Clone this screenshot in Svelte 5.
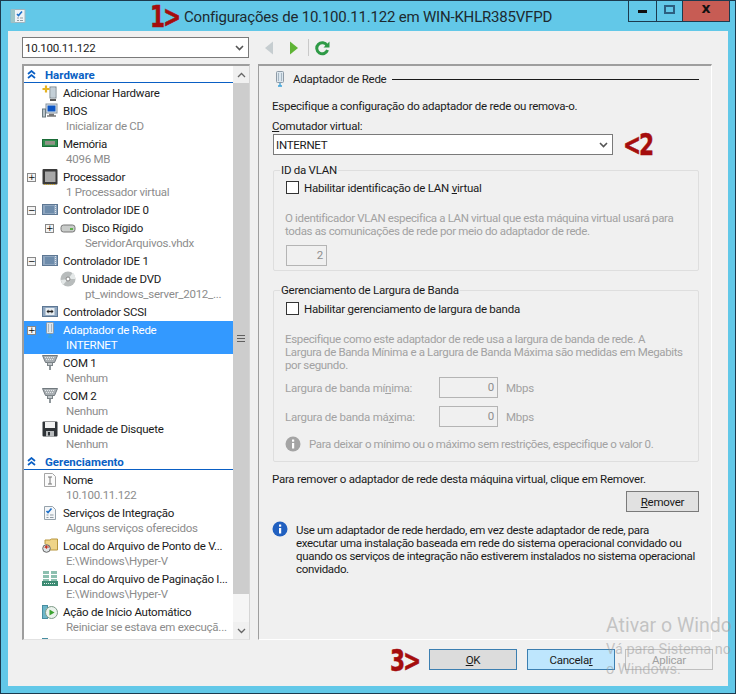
<script>
  const hardware = [
    { t: 'Adicionar Hardware', i: 'add' },
    { t: 'BIOS', s: 'Inicializar de CD', i: 'bios' },
    { t: 'Memória', s: '4096 MB', i: 'mem' },
    { t: 'Processador', s: '1 Processador virtual', i: 'cpu', x: '+' },
    { t: 'Controlador IDE 0', i: 'ide', x: '-' },
    { t: 'Disco Rígido', s: 'ServidorArquivos.vhdx', i: 'disk', x: '+', sub: true },
    { t: 'Controlador IDE 1', i: 'ide', x: '-' },
    { t: 'Unidade de DVD', s: 'pt_windows_server_2012_...', i: 'dvd', sub: true },
    { t: 'Controlador SCSI', i: 'scsi' },
    { t: 'Adaptador de Rede', s: 'INTERNET', i: 'net', x: '+', sel: true },
    { t: 'COM 1', s: 'Nenhum', i: 'com' },
    { t: 'COM 2', s: 'Nenhum', i: 'com' },
    { t: 'Unidade de Disquete', s: 'Nenhum', i: 'floppy' }
  ];
  const manage = [
    { t: 'Nome', s: '10.100.11.122', i: 'name' },
    { t: 'Serviços de Integração', s: 'Alguns serviços oferecidos', i: 'doc' },
    { t: 'Local do Arquivo de Ponto de V...', s: 'E:\\Windows\\Hyper-V', i: 'folder' },
    { t: 'Local do Arquivo de Paginação I...', s: 'E:\\Windows\\Hyper-V', i: 'page' },
    { t: 'Ação de Início Automático', s: 'Reiniciar se estava em execuçã...', i: 'start' },
    { t: '', i: 'start' }
  ];
</script>

{#snippet icon(name)}
  <svg class="ic" viewBox="0 0 16 16" width="16" height="16" aria-hidden="true">
    {#if name === 'add'}
      <rect x="8" y="2" width="6" height="11" fill="#e8eef2" stroke="#77838c"/><path d="M10 3v9M12 3v9" stroke="#9fb0bb"/><path d="M8 15h6" stroke="#333" stroke-width="1.6"/><path d="M4 0.500v7M0.500 4h7" stroke="#e6b422" stroke-width="2.200"/>
    {:else if name === 'bios'}
      <rect x="4" y="1" width="11" height="9" fill="#dfe7ee" stroke="#8794a0"/><rect x="5.500" y="2.500" width="8" height="6" fill="#0d56c4"/><path d="M7 11.500h5M5 13h9" stroke="#777" stroke-width="1.400"/><rect x="0.500" y="6" width="3" height="8" fill="#b9c3c9" stroke="#6c7a80"/>
    {:else if name === 'mem'}
      <rect x="0.500" y="3.500" width="15" height="7" fill="#2f8f4e" stroke="#1c6b38"/><rect x="3" y="5" width="10" height="3.500" fill="#f3f0dc"/><path d="M4 5v3.500M6 5v3.500M8 5v3.500M10 5v3.500M12 5v3.500" stroke="#333"/>
    {:else if name === 'cpu'}
      <rect x="0.500" y="0" width="15" height="15.500" rx="1" fill="#3b3b3b"/><rect x="3" y="2.500" width="10.500" height="10.500" fill="#a8a8a8"/><path d="M2 15.500h12" stroke="#c9a227" stroke-dasharray="1 1"/>
    {:else if name === 'ide'}
      <rect x="0.500" y="2.500" width="15" height="10" fill="#8fa6bf" stroke="#5d7793"/><rect x="3" y="4" width="9" height="7" fill="#6e8cab"/><path d="M13.500 3v9" stroke="#dde5ec" stroke-dasharray="1 1"/>
    {:else if name === 'disk'}
      <rect x="1" y="5" width="14" height="7" rx="2.500" fill="#c9ccca" stroke="#777"/><rect x="10" y="8" width="3" height="2" fill="#5fb04a"/>
    {:else if name === 'dvd'}
      <circle cx="8" cy="8" r="7.500" fill="#b8bcbc"/><path d="M8 8 L13 1.500 A7.500 7.500 0 0 1 15 8Z" fill="#e4e8e8"/><path d="M8 8 L3 14 A7.500 7.500 0 0 1 1 9Z" fill="#e4e8e8"/><circle cx="8" cy="8" r="2" fill="#fff" stroke="#888"/>
    {:else if name === 'scsi'}
      <rect x="0.500" y="2.500" width="15" height="10" fill="#8fa6bf" stroke="#5d7793"/><rect x="3.500" y="4" width="9" height="7" fill="#e8eef2"/><path d="M4.500 7.500l2-2v1.200h3V5.500l2 2-2 2V8.300h-3v1.200z" fill="#222"/>
    {:else if name === 'net'}
      <rect x="4.500" y="0.500" width="7" height="11" rx="1" fill="#dce6ee" stroke="#8d9aa6"/><path d="M6.500 2v8M9.500 2v8" stroke="#a6b6c2"/><path d="M8 12v3M6 15h4" stroke="#3aa0d8" stroke-width="1.300"/>
    {:else if name === 'com'}
      <path d="M0.500 0.500h15l-3 7H3.500z" fill="#a9afb3" stroke="#71797e"/><path d="M3 2.500h10M4 4.500h8" stroke="#e5e8ea" stroke-dasharray="1 1"/><rect x="5.500" y="7.500" width="5" height="3" fill="#c3c8cb" stroke="#7c8488"/><rect x="7" y="11" width="2" height="4" fill="#8f979b"/>
    {:else if name === 'floppy'}
      <rect x="0.500" y="0.500" width="15" height="15" rx="1" fill="#2f3337"/><rect x="3" y="1" width="10" height="6" fill="#f2f2f2"/><rect x="4" y="10" width="8" height="5.500" fill="#b9bcbe"/><rect x="6" y="11" width="2" height="3.500" fill="#2f3337"/>
    {:else if name === 'name'}
      <path d="M2.500 1.500h8l3 3v10h-11z" fill="#fbfbfb" stroke="#a5a5a5"/><path d="M6 5h4M8 5v7M6 12h4" stroke="#777" fill="none"/>
    {:else if name === 'doc'}
      <path d="M2.500 1.500h8l3 3v10h-11z" fill="#f4f6f8" stroke="#96a2ab"/><path d="M4.500 6l1.500 1.500 3.500-4" stroke="#1c6fc9" stroke-width="1.600" fill="none"/><path d="M4.500 10h2M8 10h3.500M4.500 12.500h2M8 12.500h3.500" stroke="#8f9ba3"/>
    {:else if name === 'folder'}
      <path d="M3 6V2h5l1.500-1H15.500v11H7" fill="#efd488" stroke="#b8963e"/><circle cx="4.500" cy="10.500" r="3.800" fill="#dfe4e6" stroke="#666"/><path d="M7 9H3.500l1.500-1.500M3.500 9l1.500 1.500" stroke="#c8321e" stroke-width="1.200" fill="none"/>
    {:else if name === 'page'}
      <path d="M1 0h6v3H1zM9 0h6v3H9zM1 4h6v3H1zM9 4h6v3H9zM1 8h6v2H1zM9 8h6v2H9z" fill="#8dc0b0"/><rect x="0" y="10" width="16" height="5" fill="#3c8a72"/><path d="M2 12.500h12" stroke="#e6f0ec" stroke-dasharray="1 1"/>
    {:else if name === 'start'}
      <rect x="0.500" y="1.500" width="5" height="13" fill="#6cb6c9" stroke="#478da0"/><circle cx="9.500" cy="8.500" r="6" fill="#eaf2ec" stroke="#7d9a86"/><path d="M7.500 5.500l5 3-5 3z" fill="#3aa32f"/>
    {:else if name === 'info'}
      <circle cx="8" cy="8" r="7.500" fill="#2160c0"/><rect x="7" y="7" width="2.200" height="5.500" fill="#fff"/><rect x="7" y="3.500" width="2.200" height="2.200" fill="#fff"/>
    {:else if name === 'infogray'}
      <circle cx="8" cy="8" r="7.500" fill="#a4a4a4"/><rect x="7" y="7" width="2.200" height="5.500" fill="#fff"/><rect x="7" y="3.500" width="2.200" height="2.200" fill="#fff"/>
    {/if}
  </svg>
{/snippet}

{#snippet chevrons()}
  <svg class="cv" viewBox="0 0 9 9" width="9" height="9" aria-hidden="true"><path d="M1 4l3.500-3L8 4M1 8l3.500-3L8 8" fill="none" stroke="#0a5fc4" stroke-width="1.700"/></svg>
{/snippet}

{#snippet drop()}
  <svg viewBox="0 0 9 6" width="9" height="6" aria-hidden="true"><path d="M1 1l3.500 3.500L8 1" fill="none" stroke="#555" stroke-width="1.600"/></svg>
{/snippet}

{#snippet row(r)}
  <div class="item" class:sel={r.sel} class:nested={r.sub}>
    <div class="line">
      <span class="exp">{#if r.x}<span class="box">{r.x === '+' ? '+' : '−'}</span>{/if}</span>
      {@render icon(r.i)}
      <span class="lbl">{r.t}</span>
    </div>
    {#if r.s}<div class="subline">{r.s}</div>{/if}
  </div>
{/snippet}

<div class="win">
  <header class="title">
    <svg class="appicon" viewBox="0 0 16 16" width="16" height="16" aria-hidden="true"><path d="M1 1.500h14v13H1z" fill="#eef3f6" stroke="#9fb5bf"/><path d="M1 1.500h4v13H1z" fill="#9cc6c9"/><path d="M7 6l1.500 1.500L12 3.500" stroke="#1c6fc9" stroke-width="1.600" fill="none"/><path d="M7 10h2M10 10h3M7 12.500h2M10 12.500h3" stroke="#8f9ba3"/></svg>
    <span class="caption">Configurações de 10.100.11.122 em WIN-KHLR385VFPD</span>
    <div class="ctrls">
      <div class="ctl min"><i></i></div>
      <div class="ctl max"><i></i></div>
      <div class="ctl close">x</div>
    </div>
  </header>

  <div class="client">
    <div class="toolbar">
      <div class="combo vm"><span>10.100.11.122</span>{@render drop()}</div>
      <div class="nav">
        <svg viewBox="0 0 10 14" width="10" height="14" aria-hidden="true"><path d="M9 0.500v13L1 7z" fill="#c6cdd0"/></svg>
        <svg viewBox="0 0 10 14" width="10" height="14" aria-hidden="true"><path d="M1 0.500v13L9 7z" fill="#5fb435"/></svg>
        <span class="sep"></span>
        <svg viewBox="0 0 16 16" width="16" height="16" aria-hidden="true"><path d="M13 5.500A5.500 5.500 0 1 0 13.500 10" fill="none" stroke="#2e9a46" stroke-width="3"/><path d="M15.500 1.500v6h-6z" fill="#2e9a46"/></svg>
      </div>
    </div>

    <div class="panes">
      <aside class="tree">
        <div class="list">
          <div class="head">{@render chevrons()}<span>Hardware</span></div>
          {#each hardware as r}{@render row(r)}{/each}
          <div class="head">{@render chevrons()}<span>Gerenciamento</span></div>
          {#each manage as r}{@render row(r)}{/each}
        </div>
        <div class="scroll">
          <div class="sbtn"><svg viewBox="0 0 9 6" width="9" height="6" aria-hidden="true"><path d="M1 5l3.500-3.500L8 5" fill="none" stroke="#666" stroke-width="1.300"/></svg></div>
          <div class="thumb"><i></i><i></i><i></i></div>
          <div class="track"></div>
          <div class="sbtn"><svg viewBox="0 0 9 6" width="9" height="6" aria-hidden="true"><path d="M1 1l3.500 3.500L8 1" fill="none" stroke="#666" stroke-width="1.300"/></svg></div>
        </div>
      </aside>

      <main class="detail">
        <div class="dhead">{@render icon('net')}<span>Adaptador de Rede</span><b></b></div>
        <p class="intro">Especifique a configuração do adaptador de rede ou remova-o.</p>
        <p class="swlabel"><u>C</u>omutador virtual:</p>
        <div class="combo sw"><span>INTERNET</span>{@render drop()}</div>

        <fieldset class="vlan">
          <legend>ID da VLAN</legend>
          <div class="check"><span class="cb"></span><span>Habilitar identificação de LAN <u>v</u>irtual</span></div>
          <p class="dim d1">O identificador VLAN especifica a LAN virtual que esta máquina virtual usará para<br>todas as comunicações de rede por meio do adaptador de rede.</p>
          <div class="num n1">2</div>
        </fieldset>

        <fieldset class="band">
          <legend>Gerenciamento de Largura de Banda</legend>
          <div class="check c2"><span class="cb"></span><span>Habilitar <u>g</u>erenciamento de largura de banda</span></div>
          <p class="dim d2">Especifique como este adaptador de rede usa a largura de banda de rede. A<br>Largura de Banda Mínima e a Largura de Banda Máxima são medidas em Megabits<br>por segundo.</p>
          <div class="bw b1"><span class="bl">Largura de banda mí<u>n</u>ima:</span><div class="num n2">0</div><span>Mbps</span></div>
          <div class="bw b2"><span class="bl">Largura de banda má<u>x</u>ima:</span><div class="num n2">0</div><span>Mbps</span></div>
          <div class="hint">{@render icon('infogray')}<span>Para deixar o mínimo ou o máximo sem restrições, especifique o valor 0.</span></div>
        </fieldset>

        <p class="rm">Para remover o adaptador de rede desta máquina virtual, clique em Remover.</p>
        <div class="rmrow"><button class="btn"><u>R</u>emover</button></div>
        <div class="note">{@render icon('info')}<p>Use um adaptador de rede herdado, em vez deste adaptador de rede, para<br>executar uma instalação baseada em rede do sistema operacional convidado ou<br>quando os serviços de integração não estiverem instalados no sistema operacional<br>convidado.</p></div>
      </main>
    </div>

    <footer class="actions">
      <button class="btn act ok"><u>O</u>K</button>
      <button class="btn act cancel">Cancela<u>r</u></button>
      <button class="btn act apply">Aplicar</button>
    </footer>
  </div>

  <span class="mark m1">1&gt;</span>
  <span class="mark m2">&lt;2</span>
  <span class="mark m3">3&gt;</span>
  <div class="wm">
    <div class="w1">Ativar o Windo</div>
    <div class="w2">Vá para Sistema no</div>
    <div class="w2">o Windows.</div>
  </div>
</div>

<style>
  :global(body) { margin: 0; }
  .win {
    position: relative; width: 736px; height: 694px; box-sizing: border-box;
    background: #62c8e8; border: 1px solid #1c3a4e; overflow: hidden;
    display: flex; flex-direction: column;
    font: 11.5px/14px Roboto, "Noto Sans", sans-serif; letter-spacing: -0.25px; color: #1a1a1a;
  }
  p { margin: 0; }
  u { text-decoration-thickness: 1px; text-underline-offset: 1px; }
  .title { height: 30px; display: flex; position: relative; flex: none; }
  .appicon { margin: 7px 0 0 9px; }
  .caption { margin: 7px 0 0 158px; font-size: 15px; line-height: 18px; letter-spacing: -0.2px; color: #1d2a30; white-space: nowrap; }
  .ctrls { position: absolute; top: -1px; right: 5px; display: flex; height: 22px; border: 1px solid #1c3a4e; border-top: 0; box-sizing: border-box; }
  .ctl { display: flex; align-items: center; justify-content: center; border-right: 1px solid #1c3a4e; height: 21px; }
  .min { width: 27px; }
  .min i { width: 9px; height: 3px; background: #111; margin-top: 2px; }
  .max { width: 25px; }
  .max i { width: 7px; height: 5px; border: 2px solid #2c5f80; margin-top: -3px; }
  .close { width: 46px; border: 0; background: #c75c54; font: bold 14px/14px "DejaVu Sans", sans-serif; color: #111; padding-bottom: 5px; box-sizing: border-box; }

  .client { flex: none; height: 655px; margin: 0 7px 0 7px; background: #f0f0f0; padding: 6px 16px 0 14px; box-sizing: border-box; display: flex; flex-direction: column; }
  .toolbar { display: flex; height: 21px; gap: 15px; }
  .combo { display: flex; align-items: center; justify-content: space-between; box-sizing: border-box; background: #fff; border: 1px solid #7a7a7a; padding: 0 4px 0 2px; height: 21px; }
  .vm { width: 227px; }
  .nav { display: flex; align-items: center; }
  .nav svg:nth-child(2) { margin-left: 15px; }
  .sep { width: 1px; height: 17px; background: #c9c9c9; margin: 0 5px 0 9px; }

  .panes { display: flex; gap: 8px; margin-top: 6px; height: 576px; }
  .tree { width: 228px; flex: none; display: flex; box-sizing: border-box; background: #fff; border-top: 2px solid #9e9e9e; border-left: 2px solid #9e9e9e; border-bottom: 1px solid #e2e2e2; border-right: 1px solid #d5d5d5; overflow: hidden; }
  .list { width: 209px; flex: none; overflow: hidden; }
  .head { height: 15px; border-bottom: 1px solid #0a5fc4; margin-bottom: 1px; display: flex; align-items: center; color: #0a5fc4; font-weight: 700; padding-top: 1px; letter-spacing: 0; }
  .cv { margin-left: 3px; }
  .head span { margin-left: 9px; }
  .line { display: flex; align-items: center; height: 18px; white-space: nowrap; }
  .exp { width: 18px; flex: none; display: flex; padding-left: 3px; box-sizing: border-box; }
  .box { width: 9px; height: 9px; box-sizing: border-box; border: 1px solid #888; background: #f4f4f4; color: #111; font: 9px/7px "DejaVu Sans", sans-serif; text-align: center; }
  .ic { flex: none; }
  .lbl { margin-left: 5px; }
  .subline { height: 15px; line-height: 12px; padding-left: 42px; color: #8c8c8c; white-space: nowrap; }
  .nested .exp { width: 36px; padding-left: 21px; }
  .nested .lbl { margin-left: 6px; }
  .nested .subline { padding-left: 61px; }
  .sel { background: #3399ff; color: #fff; }
  .sel .subline { color: #fff; }
  .scroll { flex: 1; display: flex; flex-direction: column; background: #cdcdcd; }
  .sbtn { height: 17px; flex: none; background: #f0f0f0; display: flex; align-items: center; justify-content: center; border: 1px solid #f0f0f0; box-sizing: border-box; }
  .thumb { height: 511px; flex: none; background: #cdcdcd; display: flex; flex-direction: column; align-items: center; justify-content: center; gap: 1px; box-sizing: border-box; }
  .thumb i { width: 8px; height: 1px; background: #606060; display: block; margin-bottom: 1px; }
  .track { flex: 1; background: #f5f5f5; }
  .detail { width: 454px; flex: none; box-sizing: border-box; border-top: 2px solid #9e9e9e; border-left: 1px solid #9e9e9e; border-right: 1px solid #fff; border-bottom: 1px solid #fff; padding: 6px 12px 0 13px; }
  .dhead { display: flex; align-items: center; height: 14px; color: #222; }
  .dhead span { margin-left: 5px; margin-right: 6px; white-space: nowrap; }
  .dhead b { flex: 1; height: 1px; background: #1a1a1a; }
  .intro { margin-top: 13px; }
  .swlabel { margin-top: 6px; }
  .sw { margin: 1px 0 0 1px; width: 340px; }
  fieldset { margin: 8px 0 0 1px; padding: 4px 0 4px 11px; border: 1px solid #dedede; border-radius: 2px; min-width: 0; }
  .band { margin-top: 12px; padding-top: 5px; padding-bottom: 9px; }
  legend { margin-left: -5px; padding: 0 1px; line-height: 14px; height: 14px; }
  .check { display: flex; align-items: center; height: 13px; margin-left: 1px; }
  .cb { width: 13px; height: 13px; box-sizing: border-box; border: 1px solid #333; background: #fff; margin-right: 5px; }
  .dim { color: #a2a2a2; line-height: 13px; white-space: nowrap; letter-spacing: -0.35px; }
  .d1 { margin-top: 18px; }
  .d2 { margin-top: 18px; }
  .num { box-sizing: border-box; border: 1px solid #b4b4b4; color: #8e8e8e; text-align: right; padding-right: 3px; }
  .n1 { width: 41px; height: 21px; line-height: 19px; margin: 7px 0 0 1px; }
  .n2 { width: 59px; height: 21px; line-height: 19px; }
  .bw { display: flex; align-items: center; gap: 8px; color: #a2a2a2; height: 21px; }
  .bl { width: 146px; }
  .b1 { margin-top: 5px; }
  .b2 { margin-top: 8px; }
  .hint { display: flex; align-items: center; gap: 8px; margin-top: 9px; color: #a2a2a2; height: 16px; white-space: nowrap; letter-spacing: -0.37px; }
  .rm { margin-top: 10px; }
  .rmrow { display: flex; justify-content: flex-end; margin-top: 5px; }
  .btn { font: inherit; letter-spacing: inherit; color: inherit; box-sizing: border-box; background: #e1e1e1; border: 1px solid #7a7a7a; height: 21px; width: 73px; padding: 0; }
  .note { display: flex; gap: 8px; margin-top: 9px; }
  .note .ic { flex: none; }
  .note p { line-height: 13px; margin-top: 3px; white-space: nowrap; letter-spacing: -0.33px; }
  .actions { display: flex; gap: 10px; justify-content: flex-end; margin-top: 9px; margin-right: -1px; }
  .act { width: 88px; }
  .ok { background: #dcdcdc; border-color: #3c7fb1; }
  .cancel { background: #bee6fd; border-color: #3c7fb1; }
  .apply { background: #f0f0f0; border-color: #bfbfbf; color: #a0a0a0; }
  .mark { position: absolute; color: #a50d0d; font: 900 31px/31px "DejaVu Sans", sans-serif; letter-spacing: -3px; -webkit-text-stroke: 0.5px #a50d0d; transform: scaleX(0.7); transform-origin: left center; }
  .m1 { left: 149px; top: 0; }
  .m2 { left: 622px; top: 128px; }
  .m3 { left: 389px; top: 644px; }
  .wm { position: absolute; left: 605px; top: 612px; color: rgba(150,150,150,.5); white-space: nowrap; font-family: Roboto, sans-serif; letter-spacing: 0; }
  .w1 { font-size: 19.5px; line-height: 26px; }
  .w2 { font-size: 14.5px; line-height: 20px; position: relative; top: 1px; }
</style>
